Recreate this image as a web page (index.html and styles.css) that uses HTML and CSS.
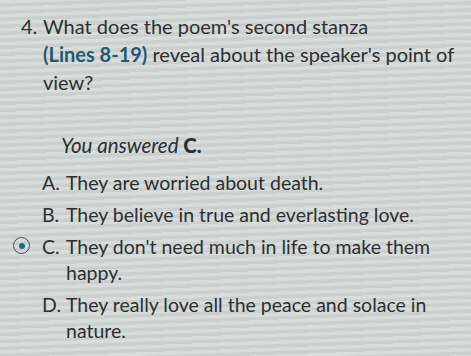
FILE: index.html
```html
<!DOCTYPE html>
<html>
<head>
<meta charset="utf-8">
<link rel="stylesheet" href="styles.css">
</head>
<body>
<div class="page">
  <div class="question">
    <span class="num">4.</span>
    <div class="qtext">What does the poem's second stanza<br><span class="ref">(Lines 8-19)</span> reveal about the speaker's point of<br>view?</div>
  </div>
  <div class="answered">You answered <b>C.</b></div>
  <ul class="choices">
    <li class="choice"><span class="radio"></span><span class="letter">A.</span><span class="ctext">They are worried about death.</span></li>
    <li class="choice"><span class="radio"></span><span class="letter">B.</span><span class="ctext">They believe in true and everlasting love.</span></li>
    <li class="choice selected"><span class="radio"><span class="dot"></span></span><span class="letter">C.</span><span class="ctext">They don't need much in life to make them<br>happy.</span></li>
    <li class="choice"><span class="radio"></span><span class="letter">D.</span><span class="ctext">They really love all the peace and solace in<br>nature.</span></li>
  </ul>
</div>
</body>
</html>
```
FILE: styles.css
```css
html, body {
  margin: 0;
  padding: 0;
}
body {
  width: 471px;
  height: 356px;
  overflow: hidden;
  background-color: #d0d5d3;
  background-image: repeating-linear-gradient(178deg, rgba(255,255,255,0.18) 0px, rgba(255,255,255,0.18) 3px, rgba(0,0,0,0.025) 4px, rgba(0,0,0,0.025) 7px);
  font-family: Lato, "Open Sans", sans-serif;
  color: #2c3032;
}
.page {
  padding: 12px 0 0 21px;
}
.question {
  display: flex;
  font-size: 20px;
  line-height: 28px;
}
.num {
  width: 22px;
  flex: none;
}
.ref {
  font-weight: bold;
  color: #1f5a72;
}
.answered {
  margin: 35px 0 0 40px;
  font-size: 20.5px;
  line-height: 28px;
  font-style: italic;
}
.answered b {
  font-style: normal;
  font-weight: 900;
}
.choices {
  list-style: none;
  margin: 11px 0 0 0;
  padding: 0;
  font-size: 19.5px;
  line-height: 26px;
}
.choice {
  display: flex;
  align-items: flex-start;
  margin-left: -8px;
  margin-bottom: 6px;
}
.radio {
  flex: none;
  width: 17px;
  height: 17px;
  margin: 3px 12px 0 0;
  border-radius: 50%;
  box-sizing: border-box;
  visibility: hidden;
  display: flex;
  align-items: center;
  justify-content: center;
}
.selected .radio {
  visibility: visible;
  border: 1.5px solid #454d4c;
}
.dot {
  width: 6px;
  height: 6px;
  border-radius: 50%;
  background: #2a6a80;
}
.letter {
  flex: none;
  width: 24px;
}
```
